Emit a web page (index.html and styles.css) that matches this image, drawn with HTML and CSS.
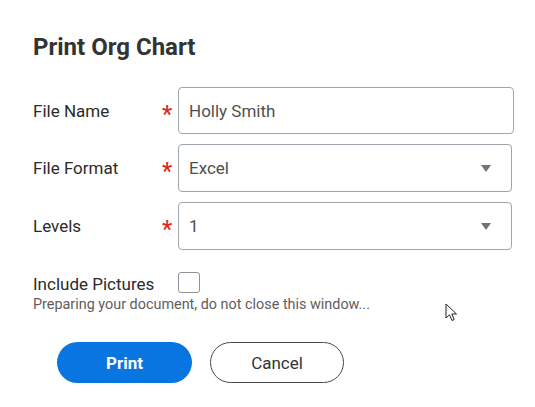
FILE: index.html
```html
<!DOCTYPE html>
<html lang="en">
<head>
<meta charset="utf-8">
<title>Print Org Chart</title>
<link rel="stylesheet" href="styles.css">
</head>
<body>
<div class="dialog">
  <h1 class="title">Print Org Chart</h1>
  <div class="row">
    <span class="label">File Name</span>
    <span class="req">*</span>
    <div class="field field-wide"><span class="value">Holly Smith</span></div>
  </div>
  <div class="row">
    <span class="label">File Format</span>
    <span class="req">*</span>
    <div class="field"><span class="value">Excel</span><span class="caret"></span></div>
  </div>
  <div class="row">
    <span class="label">Levels</span>
    <span class="req">*</span>
    <div class="field"><span class="value">1</span><span class="caret"></span></div>
  </div>
  <div class="row row-check">
    <span class="label">Include Pictures</span>
    <span class="req-space"></span>
    <span class="checkbox"></span>
  </div>
  <p class="status">Preparing your document, do not close this window...</p>
  <div class="actions">
    <button class="btn btn-primary">Print</button>
    <button class="btn btn-secondary">Cancel</button>
  </div>
  <svg class="cursor" width="13" height="19" viewBox="0 0 13 19" aria-hidden="true">
    <path d="M1 1 L1 15 L4.5 11.8 L7 17.5 L9.2 16.5 L6.8 11 L11.5 11 Z" fill="#fff" stroke="#222" stroke-width="1" stroke-linejoin="round"/>
  </svg>
</div>
</body>
</html>
```

FILE: styles.css
```css
* { box-sizing: border-box; }
html, body { margin: 0; padding: 0; background: #fff; }
body {
  font-family: Roboto, "Noto Sans", "Liberation Sans", sans-serif;
  color: #333;
}
.dialog {
  position: relative;
  width: 535px;
  height: 407px;
  padding: 33px 0 0 33px;
}
.title {
  margin: 0 0 25px;
  font-size: 24px;
  line-height: 29px;
  font-weight: 700;
  color: #333;
}
.row {
  display: flex;
  align-items: center;
  margin-bottom: 10px;
}
.label {
  width: 127px;
  font-size: 17px;
  line-height: 20px;
  font-weight: 400;
  color: #2b2b2b;
}
.req {
  width: 18px;
  padding-left: 2px;
  font-size: 23px;
  line-height: 20px;
  margin-top: 8px;
  color: #e0281c;
  font-weight: 500;
}
.req-space { width: 18px; }
.field {
  display: flex;
  align-items: center;
  justify-content: space-between;
  width: 334px;
  height: 48px;
  padding: 0 20px 0 10px;
  border: 1px solid #a0a6ad;
  border-radius: 4px;
  background: #fff;
}
.field-wide { width: 336px; height: 47px; }
.value {
  font-size: 17px;
  color: #4f4f4f;
}
.caret {
  width: 0;
  height: 0;
  border-left: 5px solid transparent;
  border-right: 5px solid transparent;
  border-top: 7px solid #6f7479;
}
.row-check {
  align-items: flex-end;
  margin-top: 22px;
  margin-bottom: 0;
}
.row-check .label { line-height: 18px; }
.checkbox {
  width: 22px;
  height: 21px;
  border: 1px solid #8d9399;
  border-radius: 3px;
}
.status {
  margin: 3px 0 0;
  font-size: 14.4px;
  line-height: 18px;
  color: #5e5e5e;
}
.actions {
  display: flex;
  gap: 18px;
  margin: 28px 0 0 24px;
}
.btn {
  height: 41px;
  border-radius: 21px;
  font-family: Roboto, "Noto Sans", "Liberation Sans", sans-serif;
  font-size: 17px;
  cursor: pointer;
}
.btn-primary {
  width: 135px;
  border: none;
  background: #0875e1;
  color: #fff;
  font-weight: 700;
}
.btn-secondary {
  width: 134px;
  border: 1px solid #494949;
  background: #fff;
  color: #333;
  font-weight: 400;
}
.cursor {
  position: absolute;
  left: 445px;
  top: 303px;
}
```
